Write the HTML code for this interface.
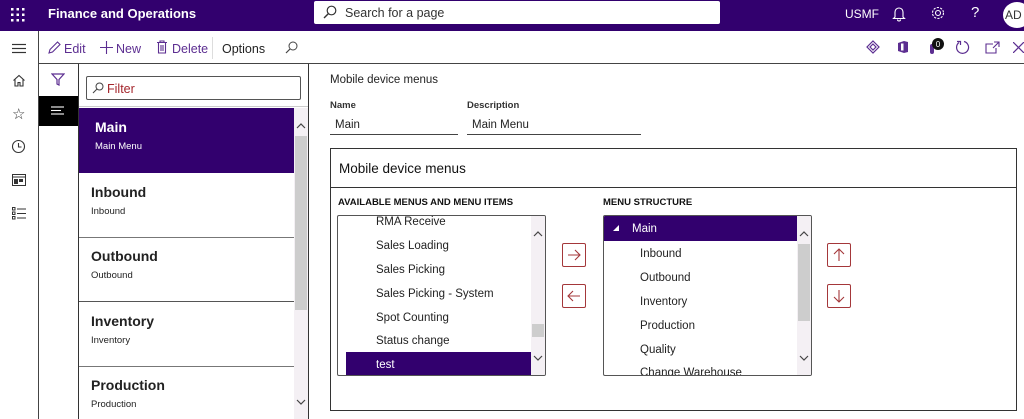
<!DOCTYPE html>
<html><head><meta charset="utf-8"><style>
*{box-sizing:border-box;margin:0;padding:0}
body{width:1024px;height:419px;overflow:hidden;background:#fff;font-family:"Liberation Sans",sans-serif;color:#222;position:relative}
.a{position:absolute}
.top{left:0;top:0;width:1024px;height:31px;background:#32006e;color:#fff}
.t{white-space:nowrap}
.purple{background:#32006e;color:#fff}
.li{font-size:11.5px;color:#222}
.btn{width:24px;height:24px;border:1px solid #a4373a;border-radius:2px;background:#fff}
</style></head><body>
<div class="a top">
  <svg class="a" style="left:11px;top:8px" width="14" height="14"><g fill="#fff"><rect x="0" y="0" width="2.5" height="2.5"/><rect x="5.5" y="0" width="2.5" height="2.5"/><rect x="11" y="0" width="2.5" height="2.5"/><rect x="0" y="5.5" width="2.5" height="2.5"/><rect x="5.5" y="5.5" width="2.5" height="2.5"/><rect x="11" y="5.5" width="2.5" height="2.5"/><rect x="0" y="11" width="2.5" height="2.5"/><rect x="5.5" y="11" width="2.5" height="2.5"/><rect x="11" y="11" width="2.5" height="2.5"/></g></svg>
  <div class="a t" style="left:48px;top:6px;font-size:13px;font-weight:bold">Finance and Operations</div>
  <div class="a" style="left:314px;top:1px;width:406px;height:23px;background:#fff;border-radius:2px"></div>
  <svg class="a" style="left:323px;top:5px" width="14" height="14"><circle cx="8.5" cy="5.5" r="4.3" fill="none" stroke="#333" stroke-width="1.2"/><line x1="5.5" y1="8.5" x2="1" y2="13" stroke="#333" stroke-width="1.4"/></svg>
  <div class="a t" style="left:345px;top:6px;font-size:12.5px;color:#333">Search for a page</div>
  <div class="a t" style="left:845px;top:7px;font-size:12px">USMF</div>
  <svg class="a" style="left:892px;top:6px" width="14" height="16"><path d="M3 11V6a4 4 0 0 1 8 0v5l1.5 1.5h-11z M5.5 13.5a1.5 1.5 0 0 0 3 0" fill="none" stroke="#fff" stroke-width="1.1"/></svg>
  <svg class="a" style="left:930px;top:5px" width="16" height="16"><circle cx="8" cy="8" r="2.5" fill="none" stroke="#fff" stroke-width="1.1"/><circle cx="8" cy="8" r="5.5" fill="none" stroke="#fff" stroke-width="1.1" stroke-dasharray="2.2 1.3"/></svg>
  <div class="a t" style="left:971px;top:4px;font-size:15px">?</div>
  <div class="a" style="left:1003px;top:2px;width:28px;height:26px;border-radius:50%;background:#fff;color:#333;font-size:12px;padding:6px 0 0 2px">AD</div>
</div>
<div class="a" style="left:0;top:31px;width:39px;height:388px;border-right:1px solid #444"></div>
<svg class="a" style="left:11px;top:43px" width="16" height="12"><g stroke="#333" stroke-width="1.2"><line x1="1" y1="1.5" x2="15" y2="1.5"/><line x1="1" y1="5.5" x2="15" y2="5.5"/><line x1="1" y1="9.5" x2="15" y2="9.5"/></g></svg>
<svg class="a" style="left:12px;top:74px" width="14" height="13"><path d="M1.5 6.5L7 1.5l5.5 5M3 5.5v6.5h3v-3.5h2v3.5h3V5.5" fill="none" stroke="#333" stroke-width="1.1"/></svg>
<div class="a t" style="left:12px;top:105px;font-size:15px;color:#333">☆</div>
<svg class="a" style="left:11px;top:139px" width="15" height="15"><circle cx="7.5" cy="7.5" r="6" fill="none" stroke="#333" stroke-width="1.1"/><path d="M7.5 4v4h3" fill="none" stroke="#333" stroke-width="1.1"/></svg>
<svg class="a" style="left:12px;top:174px" width="14" height="12"><rect x="0.5" y="0.5" width="13" height="11" fill="none" stroke="#333"/><line x1="0.5" y1="3" x2="13.5" y2="3" stroke="#333"/><rect x="2" y="5" width="4" height="5" fill="#333"/><rect x="7" y="5" width="4" height="3" fill="#333"/></svg>
<svg class="a" style="left:12px;top:207px" width="14" height="13"><g fill="none" stroke="#333"><rect x="0.5" y="0.5" width="2.5" height="2.5"/><rect x="0.5" y="5" width="2.5" height="2.5"/><rect x="0.5" y="9.5" width="2.5" height="2.5"/><line x1="5" y1="2" x2="14" y2="2"/><line x1="5" y1="6.5" x2="14" y2="6.5"/><line x1="5" y1="11" x2="14" y2="11"/></g></svg>
<div class="a" style="left:39px;top:63px;width:985px;height:1px;background:#444"></div>
<svg class="a" style="left:48px;top:41px" width="13" height="13"><path d="M1 12l1-3.5L9.5 1l2.5 2.5L4.5 11z" fill="none" stroke="#5c2e91" stroke-width="1.1"/></svg>
<div class="a t" style="left:64px;top:42px;font-size:12.5px;color:#5c2e91">Edit</div>
<svg class="a" style="left:100px;top:41px" width="13" height="13"><path d="M6.5 0v13M0 6.5h13" stroke="#5c2e91" stroke-width="1.1"/></svg>
<div class="a t" style="left:116px;top:42px;font-size:12.5px;color:#5c2e91">New</div>
<svg class="a" style="left:156px;top:40px" width="12" height="14"><path d="M1 2.5h10M4 2.5V1h4v1.5M2.5 2.5v10.5h7V2.5M5 5v6M7 5v6" fill="none" stroke="#5c2e91" stroke-width="1.1"/></svg>
<div class="a t" style="left:172px;top:42px;font-size:12.5px;color:#5c2e91">Delete</div>
<div class="a" style="left:212px;top:37px;width:1px;height:22px;background:#ddd"></div>
<div class="a t" style="left:222px;top:42px;font-size:12.5px;color:#222">Options</div>
<svg class="a" style="left:285px;top:41px" width="13" height="13"><circle cx="8" cy="5" r="4" fill="none" stroke="#444" stroke-width="1"/><line x1="5" y1="8" x2="1" y2="12" stroke="#444" stroke-width="1.2"/></svg>
<svg class="a" style="left:866px;top:40px" width="14" height="14"><path d="M7 1l6 6-6 6-6-6z M7 4l3 3-3 3-3-3z" fill="none" stroke="#5c2e91" stroke-width="1.2"/></svg>
<svg class="a" style="left:897px;top:40px" width="12" height="14"><path d="M1 3l6-2 4 1v10l-4 1-6-2z" fill="#5c2e91"/><rect x="4" y="3.5" width="2.5" height="7" fill="#fff"/></svg>
<svg class="a" style="left:928px;top:38px" width="18" height="18"><rect x="2" y="6" width="4" height="10" rx="2" fill="#5c2e91"/><circle cx="10" cy="6" r="6" fill="#111"/><text x="10" y="9" font-size="8" fill="#fff" text-anchor="middle" font-family="Liberation Sans">0</text></svg>
<svg class="a" style="left:955px;top:40px" width="15" height="15"><path d="M4 2.5A6 6 0 1 0 9 1.5" fill="none" stroke="#5c2e91" stroke-width="1.2"/><path d="M2 1.5h3.5v3.5" fill="none" stroke="#5c2e91" stroke-width="1.2"/></svg>
<svg class="a" style="left:985px;top:41px" width="15" height="13"><path d="M8 3H1v9h10V7 M9 1h5v5M14 1L8 7" fill="none" stroke="#5c2e91" stroke-width="1.1"/></svg>
<svg class="a" style="left:1013px;top:42px" width="11" height="11"><path d="M0 0l11 11M11 0L0 11" stroke="#5c2e91" stroke-width="1.2"/></svg>
<svg class="a" style="left:51px;top:73px" width="14" height="13"><path d="M1 1h12L8 6.5V12L6 11V6.5z" fill="none" stroke="#5c2e91" stroke-width="1.2"/></svg>
<div class="a" style="left:39px;top:96px;width:39px;height:30px;background:#000"></div>
<svg class="a" style="left:51px;top:106px" width="14" height="9"><g stroke="#fff" stroke-width="1.1"><line x1="0" y1="1" x2="13" y2="1"/><line x1="0" y1="4.5" x2="10" y2="4.5"/><line x1="0" y1="8" x2="13" y2="8"/></g></svg>
<div class="a" style="left:78px;top:64px;width:1px;height:355px;background:#333"></div>
<div class="a" style="left:308px;top:64px;width:1px;height:355px;background:#333"></div>
<div class="a" style="left:79px;top:106px;width:229px;height:1px;background:#ccc"></div>
<div class="a" style="left:86px;top:76px;width:215px;height:24px;border:1px solid #555;border-radius:2px"></div>
<svg class="a" style="left:92px;top:82px" width="12" height="12"><circle cx="7.5" cy="4.5" r="3.5" fill="none" stroke="#444"/><line x1="5" y1="7" x2="1" y2="11" stroke="#444" stroke-width="1.1"/></svg>
<div class="a t" style="left:107px;top:82px;font-size:12.5px;color:#a4262c">Filter</div>
<div class="a purple" style="left:79px;top:108px;width:215px;height:65px"></div>
<div class="a t" style="left:95px;top:119px;font-size:14px;font-weight:bold;color:#fff">Main</div>
<div class="a t" style="left:95px;top:141px;font-size:9.5px;color:#fff">Main Menu</div>
<div class="a t" style="left:91px;top:184px;font-size:14px;font-weight:bold">Inbound</div>
<div class="a t" style="left:91px;top:206px;font-size:9.5px">Inbound</div>
<div class="a" style="left:79px;top:237px;width:215px;height:1px;background:#777"></div>
<div class="a t" style="left:91px;top:248px;font-size:14px;font-weight:bold">Outbound</div>
<div class="a t" style="left:91px;top:270px;font-size:9.5px">Outbound</div>
<div class="a" style="left:79px;top:301px;width:215px;height:1px;background:#555"></div>
<div class="a t" style="left:91px;top:313px;font-size:14px;font-weight:bold">Inventory</div>
<div class="a t" style="left:91px;top:335px;font-size:9.5px">Inventory</div>
<div class="a" style="left:79px;top:366px;width:215px;height:1px;background:#777"></div>
<div class="a t" style="left:91px;top:377px;font-size:14px;font-weight:bold">Production</div>
<div class="a t" style="left:91px;top:399px;font-size:9.5px">Production</div>
<div class="a" style="left:294px;top:108px;width:14px;height:311px;background:#f4f0f4"></div>
<div class="a" style="left:295px;top:136px;width:12px;height:174px;background:#cdcdcd"></div>
<svg class="a" style="left:296px;top:123px" width="10" height="6"><path d="M1 5l4-4 4 4" fill="none" stroke="#444" stroke-width="1.2"/></svg>
<svg class="a" style="left:296px;top:399px" width="10" height="6"><path d="M1 1l4 4 4-4" fill="none" stroke="#444" stroke-width="1.2"/></svg>
<div class="a t" style="left:330px;top:74px;font-size:11.5px">Mobile device menus</div>
<div class="a t" style="left:330px;top:100px;font-size:9.5px;font-weight:bold;color:#333">Name</div>
<div class="a t" style="left:467px;top:100px;font-size:9.5px;font-weight:bold;color:#333">Description</div>
<div class="a t" style="left:335px;top:119px;font-size:11.5px">Main</div>
<div class="a t" style="left:472px;top:119px;font-size:11.5px">Main Menu</div>
<div class="a" style="left:330px;top:134px;width:128px;height:1px;background:#444"></div>
<div class="a" style="left:467px;top:134px;width:174px;height:1px;background:#444"></div>
<div class="a" style="left:330px;top:148px;width:687px;height:263px;border:1px solid #333"></div>
<div class="a t" style="left:339px;top:161px;font-size:13.5px;color:#111">Mobile device menus</div>
<div class="a" style="left:331px;top:187px;width:685px;height:1px;background:#333"></div>
<div class="a t" style="left:338px;top:197px;font-size:9.5px;font-weight:bold;color:#111">AVAILABLE MENUS AND MENU ITEMS</div>
<div class="a t" style="left:603px;top:197px;font-size:9.5px;font-weight:bold;color:#111">MENU STRUCTURE</div>
<div class="a" style="left:337px;top:215px;width:209px;height:161px;border:1px solid #555;border-radius:2px;overflow:hidden">
  <div class="a t li" style="left:38px;top:0px">RMA Receive</div>
  <div class="a t li" style="left:38px;top:24px">Sales Loading</div>
  <div class="a t li" style="left:38px;top:48px">Sales Picking</div>
  <div class="a t li" style="left:38px;top:72px">Sales Picking - System</div>
  <div class="a t li" style="left:38px;top:96px">Spot Counting</div>
  <div class="a t li" style="left:38px;top:119px">Status change</div>
  <div class="a purple" style="left:8px;top:136px;width:185px;height:24px"></div>
  <div class="a t li" style="left:38px;top:143px;color:#fff">test</div>
  <div class="a" style="left:193px;top:0;width:15px;height:160px;background:#f4f0f4"></div>
  <div class="a" style="left:194px;top:108px;width:12px;height:13px;background:#cdcdcd"></div>
  <svg class="a" style="left:195px;top:15px" width="10" height="6"><path d="M1 5l4-4 4 4" fill="none" stroke="#444" stroke-width="1.2"/></svg>
  <svg class="a" style="left:195px;top:139px" width="10" height="6"><path d="M1 1l4 4 4-4" fill="none" stroke="#444" stroke-width="1.2"/></svg>
</div>
<div class="a btn" style="left:562px;top:243px"><svg width="22" height="22"><path d="M5 11h12M12 6l5 5-5 5" fill="none" stroke="#a4373a" stroke-width="1.1"/></svg></div>
<div class="a btn" style="left:562px;top:284px"><svg width="22" height="22"><path d="M17 11H5M10 6l-5 5 5 5" fill="none" stroke="#a4373a" stroke-width="1.1"/></svg></div>
<div class="a" style="left:603px;top:215px;width:209px;height:161px;border:1px solid #555;border-radius:2px;overflow:hidden">
  <div class="a purple" style="left:0;top:0;width:193px;height:25px"></div>
  <svg class="a" style="left:9px;top:9px" width="6" height="6"><path d="M6 0v6H0z" fill="#fff"/></svg>
  <div class="a t li" style="left:28px;top:7px;color:#fff">Main</div>
  <div class="a t li" style="left:36px;top:32px">Inbound</div>
  <div class="a t li" style="left:36px;top:56px">Outbound</div>
  <div class="a t li" style="left:36px;top:80px">Inventory</div>
  <div class="a t li" style="left:36px;top:104px">Production</div>
  <div class="a t li" style="left:36px;top:128px">Quality</div>
  <div class="a t li" style="left:36px;top:151px">Change Warehouse</div>
  <div class="a" style="left:193px;top:0;width:15px;height:160px;background:#f4f0f4"></div>
  <div class="a" style="left:194px;top:28px;width:12px;height:77px;background:#cdcdcd"></div>
  <svg class="a" style="left:195px;top:15px" width="10" height="6"><path d="M1 5l4-4 4 4" fill="none" stroke="#444" stroke-width="1.2"/></svg>
  <svg class="a" style="left:195px;top:139px" width="10" height="6"><path d="M1 1l4 4 4-4" fill="none" stroke="#444" stroke-width="1.2"/></svg>
</div>
<div class="a btn" style="left:827px;top:243px"><svg width="22" height="22"><path d="M11 17V5M6 10l5-5 5 5" fill="none" stroke="#a4373a" stroke-width="1.1"/></svg></div>
<div class="a btn" style="left:827px;top:284px"><svg width="22" height="22"><path d="M11 5v12M6 12l5 5 5-5" fill="none" stroke="#a4373a" stroke-width="1.1"/></svg></div>
</body></html>
